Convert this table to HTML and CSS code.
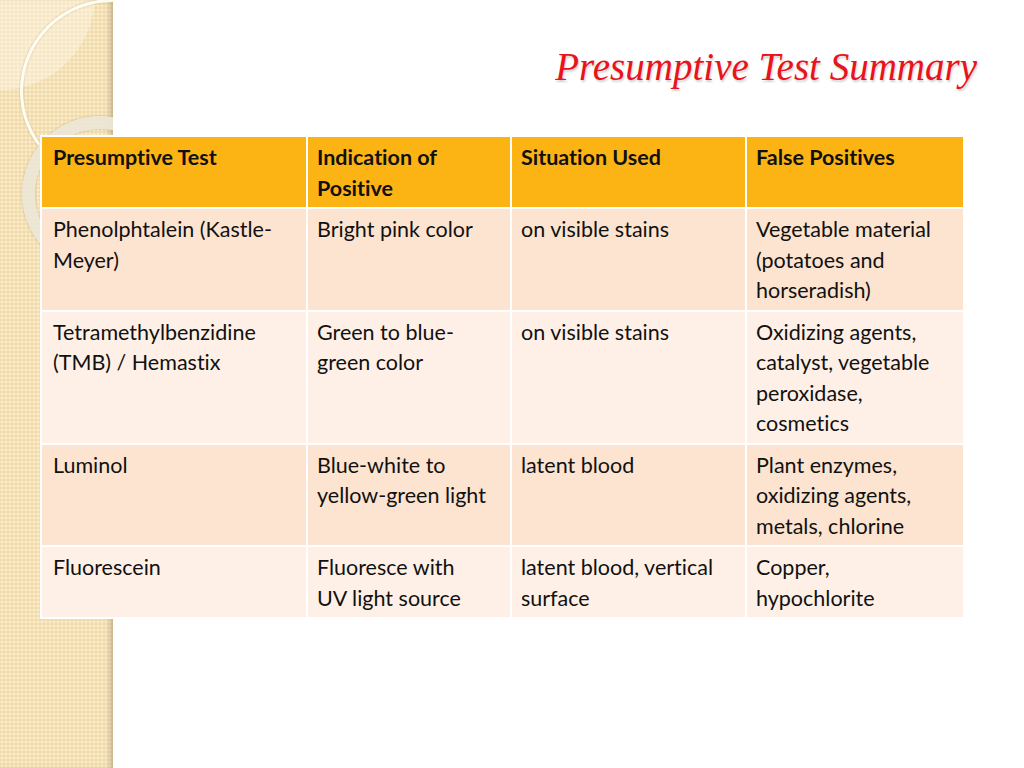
FILE: index.html
```html
<!DOCTYPE html>
<html lang="en">
<head>
<meta charset="utf-8">
<title>Presumptive Test Summary</title>
<link rel="stylesheet" href="styles.css">
</head>
<body>
<div class="slide">
  <div class="strip">
    <div class="glow"></div>
    <div class="arc"></div>
    <div class="ring"></div>
  </div>
  <div class="content">
    <h1 class="title">Presumptive Test Summary</h1>
    <table class="summary">
      <colgroup>
        <col class="c1"><col class="c2"><col class="c3"><col class="c4">
      </colgroup>
      <thead>
        <tr class="head">
          <th>Presumptive Test</th>
          <th>Indication of<br>Positive</th>
          <th>Situation Used</th>
          <th>False Positives</th>
        </tr>
      </thead>
      <tbody>
        <tr class="odd">
          <td>Phenolphtalein (Kastle-<br>Meyer)</td>
          <td>Bright pink color</td>
          <td>on visible stains</td>
          <td>Vegetable material<br>(potatoes and<br>horseradish)</td>
        </tr>
        <tr class="even">
          <td>Tetramethylbenzidine<br>(TMB) / Hemastix</td>
          <td>Green to blue-<br>green color</td>
          <td>on visible stains</td>
          <td>Oxidizing agents,<br>catalyst, vegetable<br>peroxidase,<br>cosmetics</td>
        </tr>
        <tr class="odd">
          <td>Luminol</td>
          <td>Blue-white to<br>yellow-green light</td>
          <td>latent blood</td>
          <td>Plant enzymes,<br>oxidizing agents,<br>metals, chlorine</td>
        </tr>
        <tr class="even">
          <td>Fluorescein</td>
          <td>Fluoresce with<br>UV light source</td>
          <td>latent blood, vertical<br>surface</td>
          <td>Copper,<br>hypochlorite</td>
        </tr>
      </tbody>
    </table>
  </div>
</div>
</body>
</html>
```

FILE: styles.css
```css
* { box-sizing: border-box; }
html, body { margin: 0; padding: 0; background: #ffffff; }

.slide {
  width: 1024px;
  height: 768px;
  display: grid;
  grid-template-columns: 1fr;
  grid-template-rows: 1fr;
  overflow: hidden;
  background: #ffffff;
}

.strip, .content { grid-area: 1 / 1; }

.strip {
  width: 113px;
  height: 768px;
  position: relative;
  z-index: 0;
  overflow: hidden;
  background-color: #f4e0b3;
  background-image:
    radial-gradient(circle, rgba(252, 242, 214, 0.75) 0.8px, transparent 1.4px),
    radial-gradient(circle, rgba(232, 210, 165, 0.4) 0.8px, transparent 1.4px);
  background-size: 4px 4px, 4px 4px;
  background-position: 0 0, 2px 2px;
  box-shadow: inset -5px 0 5px -2px rgba(120, 100, 70, 0.35);
}

.glow {
  position: absolute;
  left: -95px;
  top: -100px;
  width: 190px;
  height: 190px;
  border-radius: 50%;
  background: rgba(255, 250, 238, 0.4);
}

.arc {
  position: absolute;
  left: 20px;
  top: -1px;
  width: 184px;
  height: 184px;
  border-radius: 50%;
  border: 3px solid rgba(255, 253, 244, 0.95);
  box-shadow: 0 0 2px rgba(170, 150, 110, 0.6), inset 0 0 2px rgba(170, 150, 110, 0.5);
}

.ring {
  position: absolute;
  left: 22px;
  top: 116px;
  width: 156px;
  height: 156px;
  border-radius: 50%;
  border: 13px solid rgba(236, 230, 214, 0.92);
  box-shadow: 0 0 2px rgba(160, 140, 100, 0.6), inset 0 0 2px rgba(160, 140, 100, 0.6);
}

.content {
  position: relative;
  z-index: 1;
  display: flex;
  flex-direction: column;
  align-items: flex-start;
}

.title {
  align-self: flex-end;
  margin: 34px 47px 0 0;
  font-family: "Liberation Serif", "DejaVu Serif", serif;
  font-style: italic;
  font-weight: normal;
  font-size: 39px;
  line-height: 66px;
  letter-spacing: 0;
  color: #e8131b;
  text-shadow: 1px 2px 2px rgba(120, 120, 120, 0.35);
}

.summary {
  margin: 35px 0 0 40px;
  border-collapse: collapse;
  table-layout: fixed;
  width: 923px;
  font-family: "Lato", "Liberation Sans", sans-serif;
  font-variant-ligatures: none;
  font-size: 21.5px;
  line-height: 30.5px;
  color: #111111;
}

.c1 { width: 266px; }
.c2 { width: 204px; }
.c3 { width: 235px; }
.c4 { width: 218px; }

.summary th,
.summary td {
  border: 2px solid #ffffff;
  padding: 5px 8px 4px 9px;
  text-align: left;
  vertical-align: top;
  white-space: nowrap;
}

.summary th:first-child,
.summary td:first-child { padding-left: 11px; }

.summary th { font-weight: bold; }

.head th { background: #fcb415; }
.odd td { background: #fce4d0; }
.even td { background: #fef0e6; }
```
